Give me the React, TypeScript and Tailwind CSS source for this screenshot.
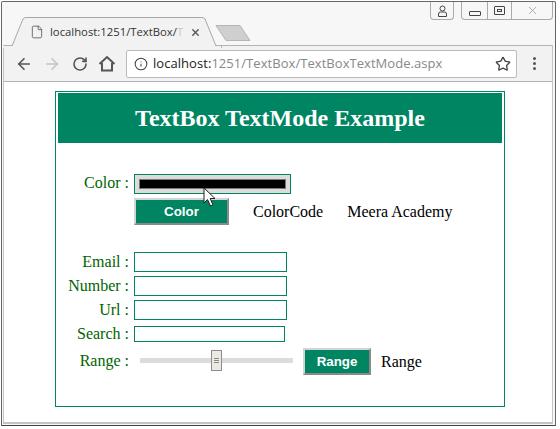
import { ArrowLeft, ArrowRight, RotateCw, Info, Star, File, X } from 'lucide-react'

const chromeFont = "font-['Open_Sans',sans-serif]"
const serif = "font-['Liberation_Serif',serif]"

function Tab() {
  return (
    <div className="relative w-[250px] h-[43px]">
      <svg className="absolute left-0 top-0" width="250" height="46" viewBox="0 0 250 46">
        <path d="M2 45 L10 44 L21 17 Q22 15.5 24 15.5 L200 15.5 Q202 15.5 203 17 L214 44 L220 45 Z" fill="#f2f2f2" stroke="#a8a8a8" />
        <path d="M1 45 H219" stroke="#f2f2f2" strokeWidth="2" />
        <path d="M214 23.5 L238 23.5 L248 38.5 L224 38.5 Z" fill="#cfcfcf" stroke="#b5b5b5" />
      </svg>
      <div className="absolute left-[28px] top-[21px] flex items-center h-[18px]">
        <File size={14} strokeWidth={1.4} className="text-[#555]" />
        <span className={`${chromeFont} ml-[6px] w-[134px] whitespace-nowrap text-[11.3px] text-[#333]`}>
          localhost:1251/TextBox/<span className="text-[#c8c8c8]">T</span>
        </span>
        <X size={11} strokeWidth={3} className="ml-[6px] text-[#555]" />
      </div>
    </div>
  )
}

function WindowControls() {
  return (
    <div className="flex items-start gap-[7px] mr-[2px]">
      <div className="w-[24px] h-[18px] border border-t-0 border-[#aaa] rounded-b-[4px] flex items-center justify-center">
        <svg width="11" height="12" viewBox="0 0 11 12" fill="none" stroke="#444">
          <circle cx="5.5" cy="3.5" r="2.5" />
          <path d="M1.5 11.5 V9 Q1.5 7 3.5 7 H7.5 Q9.5 7 9.5 9 V11.5 Z" />
        </svg>
      </div>
      <div className="w-[92px] h-[18px] border border-t-0 border-[#aaa] rounded-b-[4px] flex">
        <div className="w-[26px] flex items-end justify-center pb-[3px] border-r border-[#aaa]">
          <div className="w-[12px] h-[5px] border border-[#444] rounded-[1px]" />
        </div>
        <div className="w-[24px] flex items-center justify-center border-r border-[#aaa]">
          <div className="w-[11px] h-[9px] border border-[#444] rounded-[1px] flex items-center justify-center">
            <div className="w-[5px] h-[3px] border border-[#444]" />
          </div>
        </div>
        <div className="flex-1 flex items-center justify-center">
          <X size={13} strokeWidth={1.2} className="text-[#888]" />
        </div>
      </div>
    </div>
  )
}

function Toolbar() {
  return (
    <div className="h-[37px] bg-[#f2f2f2] border-t border-b border-[#b4b4b4] flex items-center pl-[11px]">
      <ArrowLeft size={18} strokeWidth={2.2} className="text-[#555]" />
      <ArrowRight size={18} strokeWidth={2.2} className="ml-[10px] text-[#c4c4c4]" />
      <RotateCw size={16} strokeWidth={2.4} className="ml-[11px] text-[#555]" />
      <svg className="ml-[10px]" width="18" height="17" viewBox="0 0 18 17" fill="none" stroke="#555" strokeWidth="2">
        <path d="M1.5 9 L9 2 L16.5 9" />
        <path d="M4 8 V15.5 H14 V8" />
      </svg>
      <div className="ml-[10px] w-[391px] h-[28px] bg-white border border-[#bbb] rounded-[2px] flex items-center pl-[7px] pr-[5px]">
        <Info size={14} strokeWidth={1.8} className="text-[#444]" />
        <span className={`${chromeFont} ml-[5px] text-[13px] tracking-[0.05px] text-[#888] whitespace-nowrap`}>
          <span className="text-[#222]">localhost:</span>1251/TextBox/TextBoxTextMode.aspx
        </span>
        <Star size={16} strokeWidth={2} className="ml-auto text-[#444]" />
      </div>
      <div className="ml-[16px] flex flex-col gap-[2px]">
        <div className="w-[3px] h-[3px] rounded-full bg-[#555]" />
        <div className="w-[3px] h-[3px] rounded-full bg-[#555]" />
        <div className="w-[3px] h-[3px] rounded-full bg-[#555]" />
      </div>
    </div>
  )
}

function Field({ label, width, height = 'h-[20px]' }: { label: string; width: string; height?: string }) {
  return (
    <div className="flex items-center h-[20px] mb-[4px]">
      <span className="w-[71px] text-right text-[#006400] whitespace-nowrap">{label}</span>
      <div className={`ml-[5px] ${width} ${height} border border-[#008563] bg-white`} />
    </div>
  )
}

function FormButton({ text, width }: { text: string; width: string }) {
  return (
    <div
      className={`${width} h-[27px] bg-[#008563] border-2 border-t-[#d4d4d4] border-l-[#d4d4d4] border-r-[#8a8a8a] border-b-[#8a8a8a] flex items-center justify-center text-white text-[13.33px] font-bold font-['Liberation_Sans',sans-serif]`}
    >
      {text}
    </div>
  )
}

function ExampleForm() {
  return (
    <div className={`${serif} ml-[51px] mt-[9px] w-[450px] h-[316px] border border-[#008563] px-[2px] pt-[1px] text-[16px] text-black`}>
      <div className="h-[50px] bg-[#008563] flex items-center justify-center text-white text-[24px] font-bold">
        TextBox TextMode Example
      </div>

      <div className="pt-[31px]">
        <div className="flex items-center h-[20px]">
          <span className="w-[71px] pb-[2px] text-right text-[#006400]">Color :</span>
          <div className="relative ml-[5px] w-[157px] h-[20px] bg-[#dcdcdc] border border-[#008563] flex items-center justify-center">
            <div className="w-[147px] h-[10px] bg-black border border-[#777]" />
            <svg className="absolute left-[68px] top-[12px]" width="14" height="21" viewBox="0 0 14 21">
              <path d="M1 1 V16 L4.5 12.5 L7.5 19 L10 18 L7.2 11.5 H12 Z" fill="#fff" stroke="#222" strokeWidth="1" />
            </svg>
          </div>
        </div>

        <div className="flex items-center mt-[4px] ml-[76px]">
          <FormButton text="Color" width="w-[95px]" />
          <span className="ml-[24px]">ColorCode</span>
          <span className="ml-[24px]">Meera Academy</span>
        </div>

        <div className="mt-[27px]">
          <Field label="Email :" width="w-[153px]" />
          <Field label="Number :" width="w-[153px]" />
          <Field label="Url :" width="w-[153px]" />
          <Field label="Search :" width="w-[151px]" height="h-[16px]" />
        </div>

        <div className="flex items-center h-[27px] mt-[2px]">
          <span className="w-[71px] pb-[2px] text-right text-[#006400]">Range :</span>
          <div className="relative ml-[11px] mb-[3px] w-[153px] h-[5px] bg-[#dcdcdc]">
            <div className="absolute left-[71px] top-[-8px] w-[11px] h-[21px] bg-[#ece9e0] border border-[#8c8c8c] flex flex-col items-center justify-center gap-[1px]">
              <div className="w-[5px] h-px bg-[#888]" />
              <div className="w-[5px] h-px bg-[#888]" />
              <div className="w-[5px] h-px bg-[#888]" />
            </div>
          </div>
          <div className="ml-[10px]">
            <FormButton text="Range" width="w-[68px]" />
          </div>
          <span className="ml-[10px]">Range</span>
        </div>
      </div>
    </div>
  )
}

export default function App() {
  return (
    <div className="w-[560px] h-[429px] bg-white pt-[1px] pl-[1px]">
      <div className="w-[555px] h-[425px] border border-[#666] border-b-[#444] rounded-t-[2px] bg-[#f7f7f7] flex flex-col">
        {/* Title strip and tab */}
        <div className="h-[43px] flex justify-between relative z-10">
          <Tab />
          <WindowControls />
        </div>
        <div className="flex-1 ml-[1px] mr-[2px] mb-[1px] flex flex-col border-l border-r border-b-2 border-[#c4c4c4]">
          <Toolbar />
          <div className="flex-1 bg-white">
            <ExampleForm />
          </div>
        </div>
      </div>
    </div>
  )
}
